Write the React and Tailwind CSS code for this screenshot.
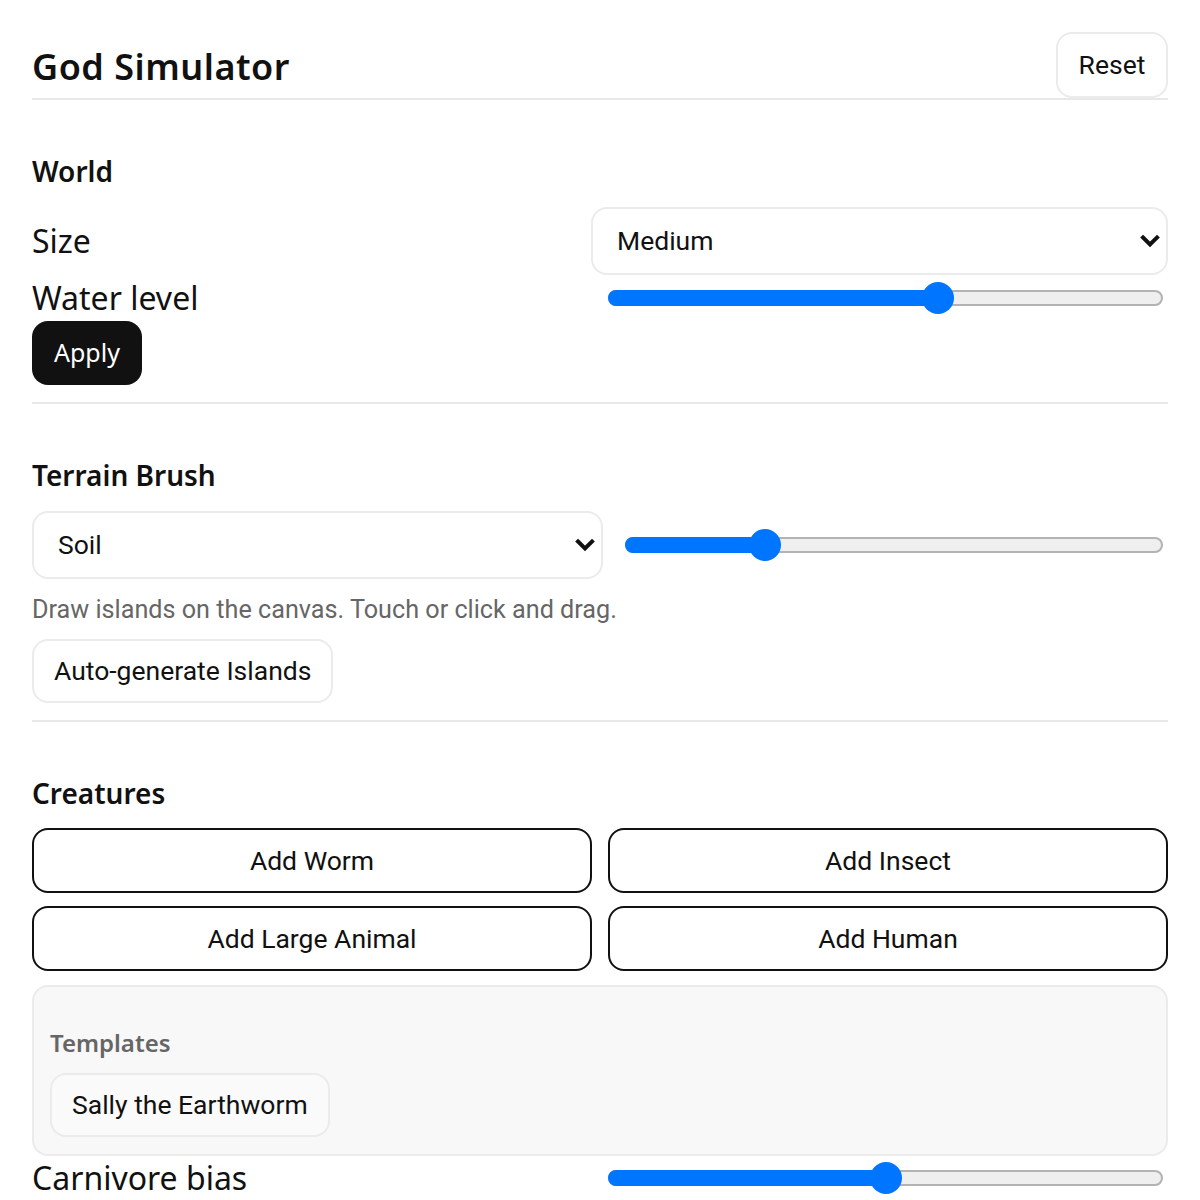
import { useState } from 'react'

const noto = "font-['Noto_Sans','Open_Sans',sans-serif]"
const roboto = "font-['Roboto','Liberation_Sans',sans-serif]"

function Chevron() {
  return (
    <svg width="20" height="14" viewBox="0 0 20 14" className="shrink-0">
      <path d="M3 3.5 L10 10.5 L17 3.5" fill="none" stroke="#111" strokeWidth="4" strokeLinecap="square" />
    </svg>
  )
}

// 下拉框
function Select({ value, className = '' }) {
  return (
    <div
      className={`flex h-[68px] items-center justify-between rounded-[16px] border-2 border-[#ebebeb] bg-white pl-[24px] pr-[6px] text-[26.5px] text-[#111] ${roboto} ${className}`}
    >
      <span>{value}</span>
      <Chevron />
    </div>
  )
}

// 滑块
function Slider({ value, className = '' }) {
  return (
    <div className={`relative h-[32px] ${className}`}>
      <div className="absolute left-0 right-0 top-[8px] h-[16px] rounded-full border-2 border-[#b3b3b3] bg-[#efefef]" />
      <div
        className="absolute left-0 top-[8px] h-[16px] rounded-full bg-[#0075ff]"
        style={{ width: `${value}%` }}
      />
      <div
        className="absolute top-0 h-[32px] w-[32px] -translate-x-1/2 rounded-full bg-[#0075ff]"
        style={{ left: `${value}%` }}
      />
    </div>
  )
}

function Heading({ children }) {
  return <h2 className={`text-[28px] font-semibold leading-[39px] text-[#111] ${noto}`}>{children}</h2>
}

export default function App() {
  const [size] = useState('Medium')

  return (
    <div className={`min-h-screen bg-white px-[32px] pt-[32px] text-[#111] ${noto}`}>
      {/* 标题栏 */}
      <header className="flex items-center justify-between border-b-2 border-[#e8e8e8]">
        <h1 className="mt-[4px] text-[36px] font-semibold leading-[1.2] tracking-[0.5px]">God Simulator</h1>
        <button className={`h-[66px] w-[112px] rounded-[16px] border-2 border-[#ebebeb] bg-white text-[26.5px] ${roboto}`}>
          Reset
        </button>
      </header>

      {/* World */}
      <section className="border-b-2 border-[#e8e8e8] pb-[17px] pt-[52px]">
        <Heading>World</Heading>
        <div className="mt-[16px] grid grid-cols-[1fr_577px] gap-x-[16px]">
          <div className="flex h-[68px] items-center text-[32px]">Size</div>
          <Select value={size} />
          <div className="flex h-[46px] items-center text-[32px]">Water level</div>
          <div className="flex items-center pl-[17px] pr-[5px]">
            <Slider value={59.4} className="w-full" />
          </div>
        </div>
        <button className="h-[64px] rounded-[16px] bg-[#111] px-[22px] text-[25px] text-white">Apply</button>
      </section>

      {/* Terrain Brush */}
      <section className="border-b-2 border-[#e8e8e8] pb-[17px] pt-[52px]">
        <Heading>Terrain Brush</Heading>
        <div className="mt-[16px] flex items-center gap-[22px]">
          <Select value="Soil" className="w-[571px] shrink-0" />
          <Slider value={26} className="mr-[5px] flex-1" />
        </div>
        <p className={`mt-[13px] text-[25.2px] leading-[36px] text-[#666] ${roboto}`}>
          Draw islands on the canvas. Touch or click and drag.
        </p>
        <button className={`mt-[11px] h-[64px] rounded-[16px] border-2 border-[#ebebeb] bg-white px-[20px] text-[26.5px] ${roboto}`}>
          Auto-generate Islands
        </button>
      </section>

      {/* Creatures */}
      <section className="pt-[52px]">
        <Heading>Creatures</Heading>
        <div className={`mt-[15px] grid grid-cols-2 gap-x-[16px] gap-y-[13px] text-[26.5px] ${roboto}`}>
          {['Add Worm', 'Add Insect', 'Add Large Animal', 'Add Human'].map((label) => (
            <button key={label} className="h-[65px] rounded-[16px] border-2 border-[#111] bg-white">
              {label}
            </button>
          ))}
        </div>
        <div className="mt-[14px] rounded-[16px] border-2 border-[#ebebeb] bg-[#f8f8f8] px-[16px] pb-[17px] pt-[38px]">
          <h3 className="text-[24px] font-semibold leading-[36px] text-[#666]">Templates</h3>
          <button className={`mt-[12px] h-[64px] rounded-[16px] border-2 border-[#ebebeb] bg-[#fafafa] px-[20px] text-[26.5px] ${roboto}`}>
            Sally the Earthworm
          </button>
        </div>
        <div className="grid grid-cols-[1fr_577px] gap-x-[16px] border-b-2 border-[#e8e8e8]">
          <div className="flex h-[44px] items-center text-[32px]">Carnivore bias</div>
          <div className="flex items-center pl-[17px] pr-[5px]">
            <Slider value={50} className="w-full" />
          </div>
        </div>
      </section>
    </div>
  )
}
